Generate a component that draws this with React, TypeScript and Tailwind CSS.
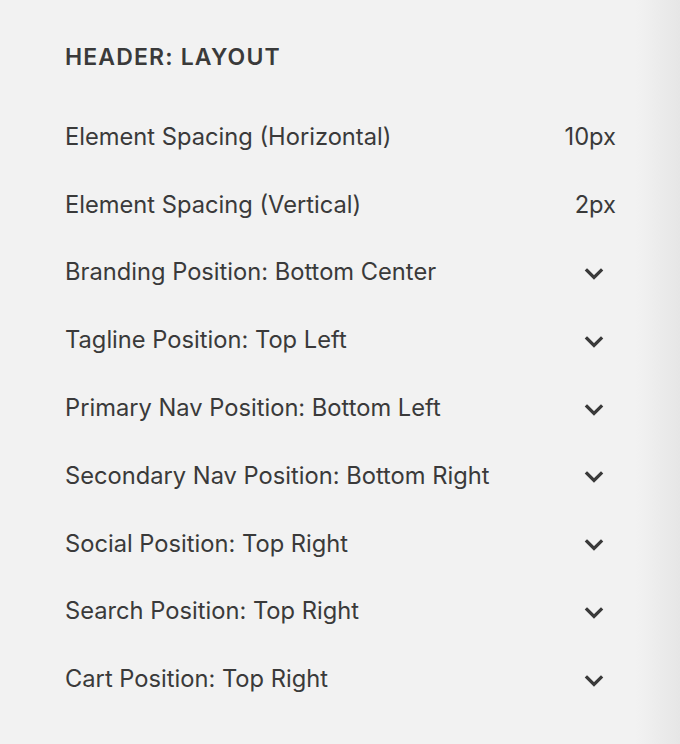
import React from "react";

const Chevron = () => (
  <svg width="20" height="14" viewBox="0 0 20 14" className="block">
    <path d="M3 3.5 L10 10.5 L17 3.5" fill="none" stroke="#3a3a3a" strokeWidth="3.2" strokeLinecap="square" />
  </svg>
);

const rows: { label: string; value?: string }[] = [
  { label: "Element Spacing (Horizontal)", value: "10px" },
  { label: "Element Spacing (Vertical)", value: "2px" },
  { label: "Branding Position: Bottom Center" },
  { label: "Tagline Position: Top Left" },
  { label: "Primary Nav Position: Bottom Left" },
  { label: "Secondary Nav Position: Bottom Right" },
  { label: "Social Position: Top Right" },
  { label: "Search Position: Top Right" },
  { label: "Cart Position: Top Right" },
];

export default function App() {
  return (
    <div
      className="w-[680px] h-[744px] bg-[#f2f2f2] text-[#3a3a3a] relative overflow-hidden"
      style={{ fontFamily: "Inter, 'Noto Sans', sans-serif" }}
    >
      <div className="absolute right-0 top-0 h-full w-[44px] bg-gradient-to-r from-[#f2f2f2] to-[#e6e6e6]" />
      <div className="relative pl-[65px] pr-[64px] pt-[43px]">
        <div className="text-[23px] font-semibold tracking-[0.05em] leading-[28px] text-[#3a3a3a]">HEADER: LAYOUT</div>
        <div className="mt-[32px] flex flex-col">
          {rows.map((r, i) => (
            <div key={i} className="flex items-center justify-between h-[67.8px]">
              <span className="text-[23.7px] leading-[28px]">{r.label}</span>
              {r.value ? (
                <span className="text-[23.7px] leading-[28px]">{r.value}</span>
              ) : (
                <span className="mr-[12px] mt-[3px]"><Chevron /></span>
              )}
            </div>
          ))}
        </div>
      </div>
    </div>
  );
}
